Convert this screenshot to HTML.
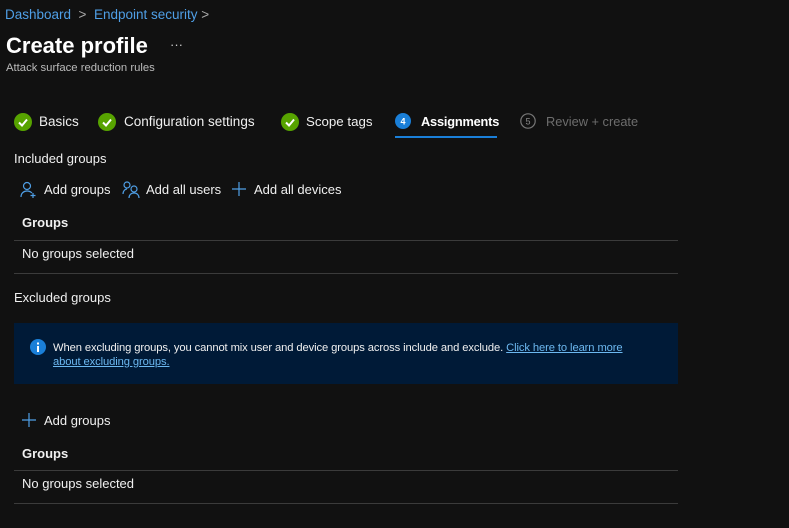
<!DOCTYPE html>
<html><head><style>
body{margin:0;width:789px;height:528px;background:#111111;font-family:"Liberation Sans",sans-serif;color:#fff;position:relative;overflow:hidden}
.a{position:absolute;white-space:nowrap}
.bc{color:#4f9fe6;font-size:13.5px}
.line{position:absolute;left:14px;width:664px;height:1px;background:#3b3b3b}
.t{font-size:13px;color:#f0f0f0}
</style></head><body>
<div class="a bc" style="left:5px;top:7px">Dashboard <span style="color:#aaa">&nbsp;&gt;&nbsp;</span> Endpoint security <span style="color:#aaa">&gt;</span></div>
<div class="a" style="left:6px;top:33px;font-size:22px;font-weight:bold">Create profile</div>
<div class="a" style="left:170px;top:37px;font-size:13px;color:#ccc">···</div>
<div class="a" style="left:6px;top:62px;font-size:11.3px;color:#bbb">Attack surface reduction rules</div>

<svg class="a" style="left:14px;top:113px" width="18" height="18"><circle cx="9" cy="9" r="9" fill="#57a300"/><path d="M5 9.5l3 3 5-6" stroke="#fff" stroke-width="2" fill="none"/></svg>
<div class="a t" style="left:39px;top:114px;font-size:13.5px">Basics</div>
<svg class="a" style="left:98px;top:113px" width="18" height="18"><circle cx="9" cy="9" r="9" fill="#57a300"/><path d="M5 9.5l3 3 5-6" stroke="#fff" stroke-width="2" fill="none"/></svg>
<div class="a t" style="left:124px;top:114px;font-size:13.5px">Configuration settings</div>
<svg class="a" style="left:281px;top:113px" width="18" height="18"><circle cx="9" cy="9" r="9" fill="#57a300"/><path d="M5 9.5l3 3 5-6" stroke="#fff" stroke-width="2" fill="none"/></svg>
<div class="a t" style="left:306px;top:114px;font-size:13.3px">Scope tags</div>
<svg class="a" style="left:395px;top:113px" width="16" height="16"><circle cx="8" cy="8" r="8" fill="#1a7fd8"/><text x="8" y="11.5" font-size="9" text-anchor="middle" fill="#fff" font-family="Liberation Sans" font-weight="bold">4</text></svg>
<div class="a t" style="left:421px;top:114px;font-weight:bold;color:#fff;font-size:12.8px;letter-spacing:-0.2px">Assignments</div>
<div class="a" style="left:395px;top:136px;width:102px;height:2px;background:#1a7fd8"></div>
<svg class="a" style="left:520px;top:113px" width="16" height="16"><circle cx="8" cy="8" r="7.2" fill="none" stroke="#777" stroke-width="1.2"/><text x="8" y="11.5" font-size="9" text-anchor="middle" fill="#888" font-family="Liberation Sans">5</text></svg>
<div class="a t" style="left:546px;top:114px;color:#6d6d6d;font-size:12.8px">Review + create</div>

<div class="a t" style="left:14px;top:151px">Included groups</div>
<svg class="a" style="left:20px;top:181px" width="18" height="18" fill="none" stroke="#4f9fe6" stroke-width="1.2"><circle cx="7" cy="5" r="3.5"/><path d="M1 16c0-4 3-6 6-6s4 1 5 2M13 12v5M10.5 14.5h5"/></svg>
<div class="a t" style="left:44px;top:182px">Add groups</div>
<svg class="a" style="left:122px;top:181px" width="20" height="18" fill="none" stroke="#4f9fe6" stroke-width="1.2"><circle cx="5" cy="4" r="3"/><circle cx="12" cy="8" r="3"/><path d="M1 13c0-3 2-5 4-5M7 17c0-3 2-5 5-5s5 2 5 5"/></svg>
<div class="a t" style="left:146px;top:182px">Add all users</div>
<svg class="a" style="left:231px;top:181px" width="16" height="16" stroke="#4f9fe6" stroke-width="1.2"><path d="M8 1v14M1 8h14"/></svg>
<div class="a t" style="left:254px;top:182px">Add all devices</div>

<div class="a t" style="left:22px;top:215px;font-weight:bold">Groups</div>
<div class="line" style="top:240px"></div>
<div class="a t" style="left:22px;top:246px">No groups selected</div>
<div class="line" style="top:273px"></div>

<div class="a t" style="left:14px;top:290px">Excluded groups</div>
<div class="a" style="left:14px;top:323px;width:664px;height:61px;background:#001a37"></div>
<svg class="a" style="left:30px;top:339px" width="16" height="16"><circle cx="8" cy="8" r="8" fill="#1a7fd8"/><rect x="7" y="7" width="2" height="6" fill="#fff"/><rect x="7" y="3.5" width="2" height="2" fill="#fff"/></svg>
<div class="a" style="left:53px;top:341px;font-size:11.2px;letter-spacing:-0.1px;color:#f0f0f0;line-height:14px">When excluding groups, you cannot mix user and device groups across include and exclude. <span style="color:#6cb8f0;text-decoration:underline">Click here to learn more </span><br><span style="color:#6cb8f0;text-decoration:underline">about excluding groups.</span></div>

<svg class="a" style="left:21px;top:412px" width="16" height="16" stroke="#4f9fe6" stroke-width="1.2"><path d="M8 1v14M1 8h14"/></svg>
<div class="a t" style="left:44px;top:413px">Add groups</div>
<div class="a t" style="left:22px;top:446px;font-weight:bold">Groups</div>
<div class="line" style="top:470px"></div>
<div class="a t" style="left:22px;top:476px">No groups selected</div>
<div class="line" style="top:503px"></div>
</body></html>
